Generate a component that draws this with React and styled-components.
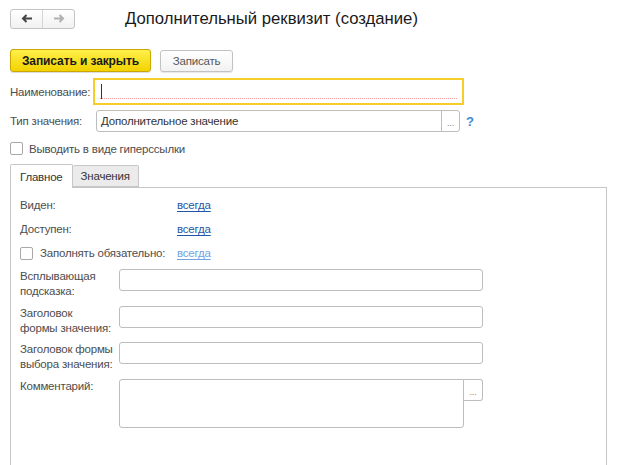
import React from "react";
import styled, { createGlobalStyle } from "styled-components";

const GlobalStyle = createGlobalStyle`
  html, body {
    margin: 0;
    padding: 0;
    background: #fff;
  }
  body {
    font-family: "Liberation Sans", Arial, sans-serif;
    font-size: 11.5px;
    letter-spacing: -0.2px;
    color: #4d4d4d;
  }
`;

const App = () => {
  return (
    <Page>
      <GlobalStyle />
      <Header>
        <NavGroup>
          <NavButton>
            <Arrow dir="left" active />
          </NavButton>
          <NavButton>
            <Arrow dir="right" />
          </NavButton>
        </NavGroup>
        <Title>Дополнительный реквизит (создание)</Title>
      </Header>

      <Toolbar>
        <PrimaryButton>Записать и закрыть</PrimaryButton>
        <SecondaryButton>Записать</SecondaryButton>
      </Toolbar>

      <FormRow top={6}>
        <Label width={83}>Наименование:</Label>
        <FocusField>
          <Caret />
          <ErrorLine />
        </FocusField>
      </FormRow>

      <FormRow top={5}>
        <Label width={86}>Тип значения:</Label>
        <Field width={364}>
          <FieldText>Дополнительное значение</FieldText>
          <FieldButton>...</FieldButton>
        </Field>
        <Help>?</Help>
      </FormRow>

      <CheckRow>
        <Checkbox />
        <span>Выводить в виде гиперссылки</span>
      </CheckRow>

      <Tabs>
        <Tab active>Главное</Tab>
        <Tab>Значения</Tab>
      </Tabs>

      <Panel>
        <LinkRow>
          <PanelLabel>Виден:</PanelLabel>
          <Link>всегда</Link>
        </LinkRow>
        <LinkRow>
          <PanelLabel>Доступен:</PanelLabel>
          <Link>всегда</Link>
        </LinkRow>
        <LinkRow>
          <PanelLabel>
            <Checkbox />
            <span>Заполнять обязательно:</span>
          </PanelLabel>
          <Link light>всегда</Link>
        </LinkRow>

        <InputRow top={7}>
          <InputLabel>
            Всплывающая
            <br />
            подсказка:
          </InputLabel>
          <TextInput />
        </InputRow>
        <InputRow>
          <InputLabel>
            Заголовок
            <br />
            формы значения:
          </InputLabel>
          <TextInput />
        </InputRow>
        <InputRow>
          <InputLabel>
            Заголовок формы
            <br />
            выбора значения:
          </InputLabel>
          <TextInput />
        </InputRow>
        <InputRow last>
          <InputLabel>Комментарий:</InputLabel>
          <TextAreaWrap>
            <TextArea />
            <SideButton>...</SideButton>
          </TextAreaWrap>
        </InputRow>
      </Panel>
    </Page>
  );
};

const Arrow = ({ dir, active }) => (
  <svg width="12" height="9" viewBox="0 0 12 9">
    <path
      d={dir === "left" ? "M11 4.5H2.5M5.5 1L2 4.5L5.5 8" : "M1 4.5H9.5M6.5 1L10 4.5L6.5 8"}
      fill="none"
      stroke={active ? "#444" : "#b0b0b0"}
      strokeWidth="2"
    />
  </svg>
);

/**
 *  STYLES
 */
const Page = styled.div`
  width: 624px;
  height: 465px;
  overflow: hidden;
  padding: 8px 0 0 10px;
  box-sizing: border-box;
`;

const Header = styled.div`
  display: flex;
  align-items: center;
  height: 21px;
`;

const NavGroup = styled.div`
  display: flex;
  width: 65px;
  height: 20px;
  border: 1px solid #c4c4c4;
  border-radius: 3px;
  box-sizing: border-box;
  background: linear-gradient(#ffffff, #f1f1f1);
`;

const NavButton = styled.div`
  flex: 1;
  display: flex;
  align-items: center;
  justify-content: center;
  & + & {
    border-left: 1px solid #d6d6d6;
  }
`;

const Title = styled.div`
  margin-left: 50px;
  font-size: 16.7px;
  letter-spacing: 0;
  color: #1a1a1a;
`;

const Toolbar = styled.div`
  display: flex;
  gap: 9px;
  margin-top: 20px;
`;

const ButtonBase = styled.div`
  height: 23px;
  box-sizing: border-box;
  border-radius: 3px;
  display: flex;
  align-items: center;
  justify-content: center;
`;

const PrimaryButton = styled(ButtonBase)`
  width: 141px;
  background: linear-gradient(#fff04a, #f2d300);
  border: 1px solid #c9a600;
  color: #1a1a1a;
  font-weight: bold;
  font-size: 12px;
  letter-spacing: -0.1px;
  box-shadow: 0 1px 1px rgba(0, 0, 0, 0.15);
`;

const SecondaryButton = styled(ButtonBase)`
  width: 73px;
  margin-top: 1px;
  height: 22px;
  background: linear-gradient(#ffffff, #f2f2f2);
  border: 1px solid #c2c2c2;
  color: #555;
  box-shadow: 0 1px 1px rgba(0, 0, 0, 0.1);
`;

const FormRow = styled.div`
  display: flex;
  align-items: center;
  margin-top: ${(p) => p.top}px;
`;

const Label = styled.div`
  width: ${(p) => p.width}px;
  flex-shrink: 0;
  white-space: nowrap;
  color: #4d4d4d;
`;

const FocusField = styled.div`
  position: relative;
  width: 371px;
  height: 27px;
  box-sizing: border-box;
  border: 2px solid #f7cd2a;
  background: #fff;
`;

const Caret = styled.div`
  position: absolute;
  left: 6px;
  top: 4px;
  width: 1px;
  height: 15px;
  background: #333;
`;

const ErrorLine = styled.div`
  position: absolute;
  left: 5px;
  right: 5px;
  bottom: 4px;
  border-bottom: 1px dotted #f29a9a;
`;

const Field = styled.div`
  display: flex;
  width: ${(p) => p.width}px;
  height: 22px;
  box-sizing: border-box;
  border: 1px solid #bdbdbd;
  border-radius: 3px;
  background: #fff;
`;

const FieldText = styled.div`
  flex: 1;
  display: flex;
  align-items: center;
  padding-left: 4px;
  color: #333;
`;

const FieldButton = styled.div`
  width: 18px;
  border-left: 1px solid #bdbdbd;
  color: #888;
  font-size: 9px;
  display: flex;
  align-items: center;
  justify-content: center;
  padding-top: 3px;
  box-sizing: border-box;
`;

const Help = styled.div`
  margin-left: 6px;
  color: #3b8bd8;
  font-weight: bold;
  font-size: 13px;
`;

const CheckRow = styled.div`
  display: flex;
  align-items: center;
  gap: 6px;
  margin-top: 9px;
  height: 15px;
`;

const Checkbox = styled.div`
  width: 13px;
  height: 13px;
  box-sizing: border-box;
  border: 1px solid #a8a8a8;
  border-radius: 2px;
  background: #fff;
  flex-shrink: 0;
`;

const Tabs = styled.div`
  display: flex;
  margin-top: 8px;
  align-items: flex-end;
`;

const Tab = styled.div`
  height: ${(p) => (p.active ? 24 : 22)}px;
  padding: 0 ${(p) => (p.active ? 9 : 8)}px;
  box-sizing: border-box;
  display: flex;
  align-items: center;
  border: 1px solid #c6c6c6;
  border-bottom: ${(p) => (p.active ? "none" : "1px solid #c6c6c6")};
  border-left: ${(p) => (p.active ? "1px solid #c6c6c6" : "none")};
  border-radius: 2px 2px 0 0;
  background: ${(p) => (p.active ? "#fff" : "#ebebeb")};
  color: #333;
  position: relative;
  z-index: ${(p) => (p.active ? 1 : 0)};
  margin-bottom: ${(p) => (p.active ? -1 : 0)}px;
`;

const Panel = styled.div`
  width: 597px;
  height: 300px;
  box-sizing: border-box;
  border: 1px solid #c6c6c6;
  padding: 9px 0 0 9px;
`;

const LinkRow = styled.div`
  display: flex;
  align-items: center;
  height: 16px;
  margin-bottom: 8px;
`;

const PanelLabel = styled.div`
  width: 157px;
  display: flex;
  align-items: center;
  gap: 7px;
  white-space: nowrap;
`;

const Link = styled.span`
  color: ${(p) => (p.light ? "#6fa3e4" : "#1f55a8")};
  text-decoration: underline;
  text-underline-offset: 2px;
`;

const InputRow = styled.div`
  display: flex;
  align-items: flex-start;
  height: ${(p) => (p.last ? "auto" : "36.7px")};
  margin-top: ${(p) => p.top || 0}px;
`;

const InputLabel = styled.div`
  width: 99px;
  flex-shrink: 0;
  line-height: 15px;
  white-space: nowrap;
`;

const TextInput = styled.div`
  width: 364px;
  height: 22px;
  box-sizing: border-box;
  border: 1px solid #bdbdbd;
  border-radius: 3px;
  background: #fff;
`;

const TextAreaWrap = styled.div`
  display: flex;
  align-items: flex-start;
`;

const TextArea = styled.div`
  width: 345px;
  height: 49px;
  box-sizing: border-box;
  border: 1px solid #bdbdbd;
  border-radius: 3px 0 3px 3px;
  background: #fff;
`;

const SideButton = styled.div`
  width: 19px;
  height: 22px;
  box-sizing: border-box;
  border: 1px solid #bdbdbd;
  border-left: none;
  border-radius: 0 3px 3px 0;
  color: #888;
  font-size: 9px;
  display: flex;
  align-items: center;
  justify-content: center;
  padding-top: 3px;
`;

export default App;
